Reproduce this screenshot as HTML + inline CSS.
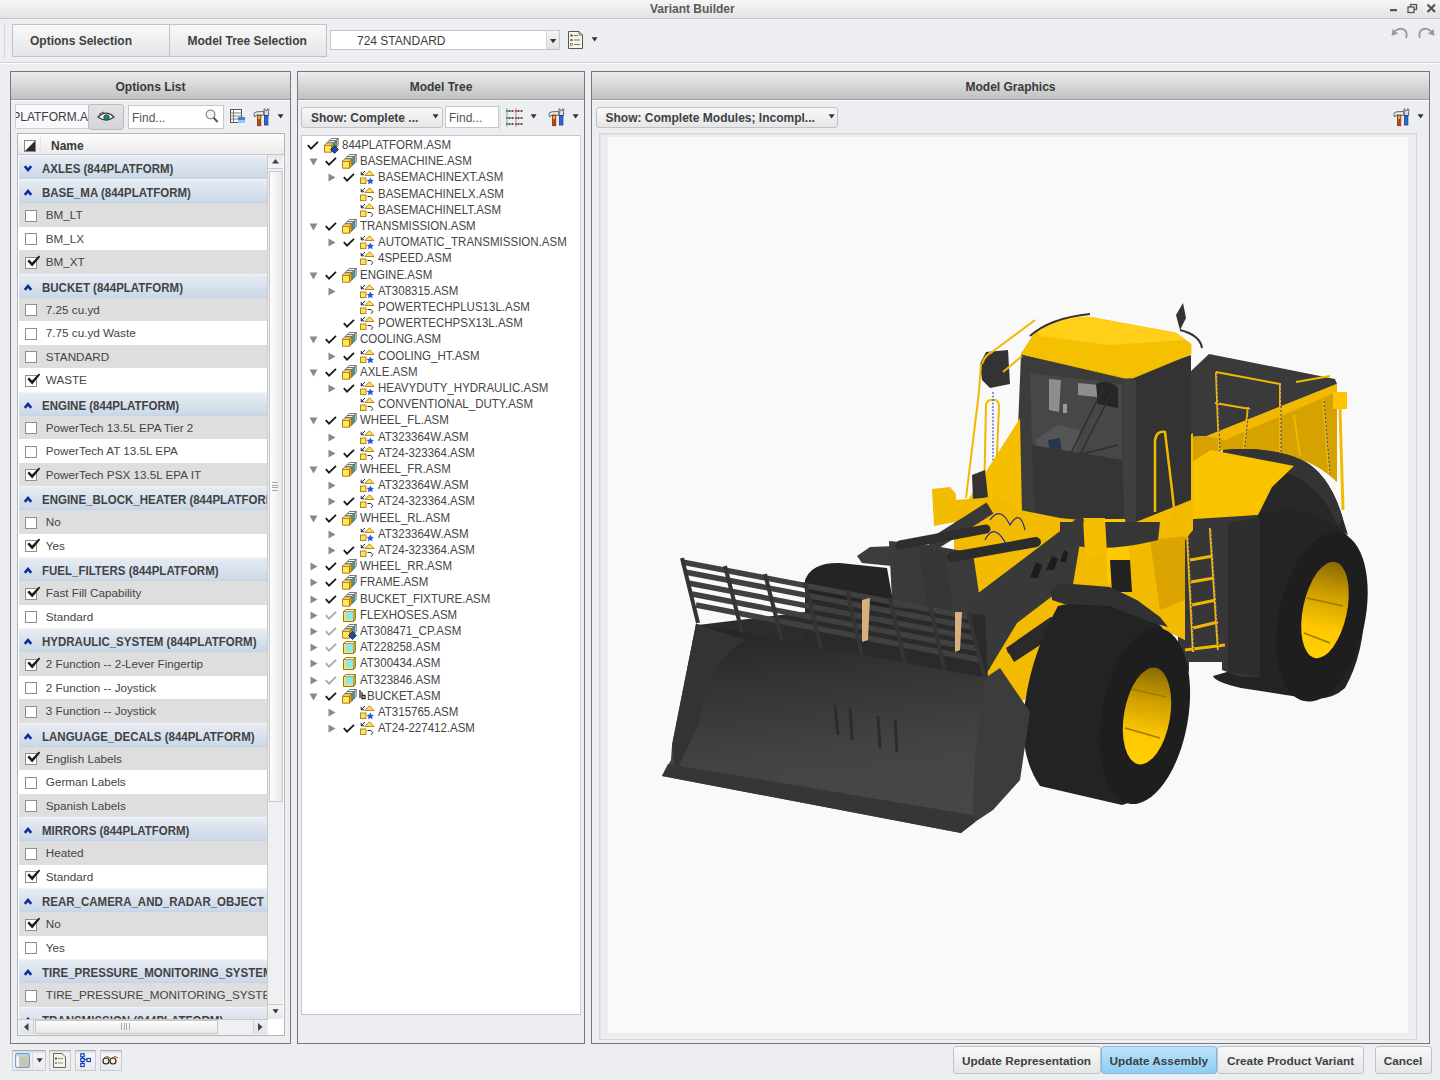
<!DOCTYPE html>
<html><head><meta charset="utf-8"><style>
*{box-sizing:border-box;margin:0;padding:0}
html,body{width:1440px;height:1080px;overflow:hidden;background:#eceef1;font-family:"Liberation Sans",sans-serif;color:#3a3a3a;position:relative}
.a{position:absolute}
svg{position:absolute;overflow:visible}
#title{left:0;top:0;width:1440px;height:19px;background:linear-gradient(#f6f6f7,#e2e3e5);border-bottom:1px solid #c4c6c9}
#tbar{left:0;top:19px;width:1440px;height:44px;border-bottom:1px solid #cdd0d3;box-shadow:0 1px 0 #fff}
.btn{background:linear-gradient(#f8f8f8,#e5e6e7);border:1px solid #c0c2c5;font-size:12px;font-weight:bold;color:#404040;text-align:center;white-space:nowrap}
.panel{border:1px solid #777;background:#eceef1}
.phead{position:absolute;left:0;top:0;right:0;height:28px;background:linear-gradient(#ececec,#c0c1c1);border-bottom:1px solid #9c9d9e;font-size:12px;font-weight:bold;color:#3a3a3a;text-align:center;line-height:30px;box-shadow:0 1px 0 #fafafa}
.inp{background:#fff;border:1px solid #c5c7ca;font-size:12px;color:#555;white-space:nowrap;overflow:hidden}
.g{position:relative;height:24px;background:linear-gradient(#f3f6fa 0,#e6ebf2 2px,#ccd9e8 22px,#c3d3e5 24px);font-weight:bold;font-size:11.5px;line-height:28px;padding-left:23.5px;white-space:nowrap;overflow:hidden;color:#424242}
.i{position:relative;height:23.5px;line-height:24.7px;padding-left:27.3px;white-space:nowrap;overflow:hidden;background:#fff;font-size:11.7px;color:#444}
.i.s{background:#dedede}
.cb{position:absolute;left:6px;top:6.5px;width:12px;height:12px;border:1px solid #8e8e8e;background:#fff}
.tr{position:absolute;height:16px;line-height:17px;white-space:nowrap;font-size:11.5px;color:#454545;transform:scaleY(1.07);transform-origin:0 12.5px}

.g span{display:inline-block;transform:scaleY(1.13);transform-origin:0 18px}

</style></head><body>
<div id="title" class="a"><span class="a" style="left:650px;top:2px;font-size:12px;font-weight:bold;color:#5a5a5a">Variant Builder</span></div>
<div id="tbar" class="a"></div>
<div class="a" style="left:4px;top:23px;width:1px;height:35px;background:#d3d5d8"></div>
<div class="a btn" style="left:12px;top:24px;width:158px;height:33px;line-height:33px;text-align:left;padding-left:17px">Options Selection</div>
<div class="a btn" style="left:169px;top:24px;width:158px;height:33px;line-height:33px;text-align:left;padding-left:17.5px">Model Tree Selection</div>
<div class="a inp" style="left:330px;top:30px;width:230px;height:20px;line-height:21px;padding-left:26px;color:#3c3c3c">724 STANDARD</div>
<div class="a" style="left:546px;top:31px;width:13px;height:18px;background:linear-gradient(#f4f4f4,#e2e2e2);border-left:1px solid #d5d5d5"></div>
<svg style="left:550px;top:38.5px" width="7" height="5"><path d="M0 0h6.2l-3.1 4.3z" fill="#2e3340"/></svg>
<svg style="left:568px;top:31px" width="15" height="18" viewBox="0 0 15 18"><path d="M0.5 0.5h10.5l3.5 3.5v13.5h-14z" fill="#f7f5e6" stroke="#555" stroke-width="1"/><path d="M11 0.5v3.5h3.5" fill="none" stroke="#555" stroke-width="0.8"/><rect x="2.5" y="3.5" width="2" height="2" fill="#333"/><rect x="2.5" y="8" width="2" height="2" fill="#555"/><rect x="2.5" y="12.5" width="2" height="2" fill="none" stroke="#555" stroke-width="0.6"/><path d="M6 4.5h4M6 9h6M6 13.5h6" stroke="#666" stroke-width="0.9"/></svg>
<svg style="left:591px;top:37px" width="7" height="5"><path d="M0.6 0.3h6l-3 4.2z" fill="#2e3340"/></svg>
<svg style="left:1389px;top:4px" width="10" height="10"><rect x="1" y="5" width="7" height="2.2" fill="#555"/></svg>
<svg style="left:1407px;top:3px" width="11" height="11" viewBox="0 0 11 11"><rect x="3.5" y="1.5" width="6" height="5" fill="none" stroke="#555" stroke-width="1.3"/><rect x="1" y="4" width="6" height="5.5" fill="#eaeaea" stroke="#555" stroke-width="1.3"/></svg>
<svg style="left:1426px;top:3px" width="11" height="11" viewBox="0 0 11 11"><path d="M1.5 1.5L9 9M9 1.5L1.5 9" stroke="#555" stroke-width="2.2"/></svg>
<svg style="left:1391px;top:27px" width="18" height="13" viewBox="0 0 18 13"><path d="M4 4 Q9 0 13.5 3 Q17 6 15 11" fill="none" stroke="#9a9a9a" stroke-width="1.8"/><path d="M0.5 9 L1.5 2 L7 6.5Z" fill="#9a9a9a"/></svg>
<svg style="left:1417px;top:27px" width="18" height="13" viewBox="0 0 18 13"><path d="M14 4 Q9 0 4.5 3 Q1 6 3 11" fill="none" stroke="#9a9a9a" stroke-width="1.8"/><path d="M17.5 9 L16.5 2 L11 6.5Z" fill="#9a9a9a"/></svg>
<div class="a panel" style="left:10px;top:71px;width:281px;height:973px"><div class="phead">Options List</div></div>
<div class="a inp" style="left:15px;top:104px;width:74px;height:25px;line-height:25px;background:#f9f8fc;border-color:#cfd0d3;color:#3c3c3c;direction:rtl;text-align:left;padding-left:1px"><span style="direction:ltr;unicode-bidi:bidi-override">PLATFORM.A</span></div>
<div class="a" style="left:88px;top:104px;width:36px;height:26px;border:1px solid #b9bbbe;border-radius:3px;background:linear-gradient(#e2e3e5,#d4d5d7)"></div>
<svg style="left:96px;top:110px" width="20" height="14" viewBox="0 0 20 14"><path d="M2 7 Q10 -1 18 7 Q10 13 2 7Z" fill="#fff" stroke="#3a3a3a" stroke-width="1.2"/><path d="M3 4 L8 2 M2.5 6 L7 4" stroke="#555" stroke-width="1"/><circle cx="10.5" cy="7.5" r="2.8" fill="#0f8a7a" stroke="#333" stroke-width="0.8"/></svg>
<div class="a inp" style="left:128px;top:105px;width:96px;height:24px;line-height:24px;padding-left:3px">Find...</div>
<svg style="left:205px;top:109px" width="14" height="15" viewBox="0 0 14 15"><circle cx="5.5" cy="5.5" r="4.3" fill="#f4f4f4" stroke="#8a8a8a" stroke-width="1.3"/><path d="M8.6 8.8 L12.6 13" stroke="#555" stroke-width="2"/></svg>
<svg style="left:230px;top:109px" width="16" height="15" viewBox="0 0 16 15"><rect x="0.5" y="0.5" width="11" height="13" fill="#fff" stroke="#555"/><path d="M0.5 4h11M0.5 7h11M0.5 10h11M3.5 0.5v13" stroke="#777" stroke-width="1"/><rect x="8" y="8" width="7" height="3" fill="#3d7fd0"/><rect x="8" y="11" width="7" height="3" fill="#9ec3ee"/></svg>
<svg style="left:253px;top:108px" width="18" height="18" viewBox="0 0 18 18"><path d="M0.8 6.8 Q0.8 4 4 3.8 L10.8 3.5 L10.8 7.2 L4.2 7.2 Q2.2 7.2 1.8 9Z" fill="#ececec" stroke="#555" stroke-width="0.9"/><rect x="4.6" y="7.2" width="3.2" height="10.5" fill="#f2b020" stroke="#6a2a0a" stroke-width="0.8"/><rect x="5.3" y="11" width="1.8" height="6.3" fill="#d02010"/><path d="M11.2 7.5 L11.2 3.2 Q10.2 1.5 11.6 0.6 L12.6 2.6 L14 2.6 L15 0.6 Q16.6 1.6 15.6 3.4 L15.6 7.5Z" fill="#dcdcdc" stroke="#555" stroke-width="0.9"/><rect x="11.5" y="7.5" width="3.4" height="9.5" fill="#2a6ad8" stroke="#1a3a80" stroke-width="0.8"/></svg>
<svg style="left:277px;top:114px" width="7" height="5"><path d="M0.6 0.3h6l-3 4.2z" fill="#2e3340"/></svg>
<div class="a" style="left:17px;top:133px;width:268px;height:903px;border:1px solid #b4b6b9;background:#fff"></div>
<div class="a" style="left:18px;top:134px;width:266px;height:21px;background:linear-gradient(#fdfdfd,#ebebeb);border-bottom:1px solid #c4c6c8"></div>
<div class="a" style="left:40px;top:136px;width:1px;height:18px;background:#e4e4e4"></div>
<svg style="left:24px;top:140px" width="12" height="12" viewBox="0 0 12 12"><rect x="0.5" y="0.5" width="11" height="11" fill="#fff" stroke="#888"/><path d="M1 11 L11 1 L11 11Z" fill="#2a2a2a"/></svg>
<div class="a" style="left:51px;top:136px;font-size:12px;font-weight:bold;color:#3a3a3a;line-height:20px">Name</div>
<div class="a" style="left:18.5px;top:155px;width:249px;height:864px;overflow:hidden"><div class="g"><svg style="left:5px;top:10px" width="8" height="7" viewBox="0 0 8 7"><path d="M0.8 1.2 L4 5 L7.2 1.2" fill="none" stroke="#0a2d9a" stroke-width="2.6"/></svg><span>AXLES (844PLATFORM)</span></div><div class="g"><svg style="left:5px;top:10px" width="8" height="7" viewBox="0 0 8 7"><path d="M0.8 5.8 L4 2 L7.2 5.8" fill="none" stroke="#0a2d9a" stroke-width="2.6"/></svg><span>BASE_MA (844PLATFORM)</span></div><div class="i s"><div class="cb"></div>BM_LT</div><div class="i"><div class="cb"></div>BM_LX</div><div class="i s"><div class="cb"><svg style="left:1px;top:-4px" width="15" height="15" viewBox="0 0 15 15"><path d="M0.4 7.2 L2.2 5.6 L5 8.6 L12 1.6 L13.2 2.8 L5.2 12.6Z" fill="#1a1a1a"/></svg></div>BM_XT</div><div class="g"><svg style="left:5px;top:10px" width="8" height="7" viewBox="0 0 8 7"><path d="M0.8 5.8 L4 2 L7.2 5.8" fill="none" stroke="#0a2d9a" stroke-width="2.6"/></svg><span>BUCKET (844PLATFORM)</span></div><div class="i s"><div class="cb"></div>7.25 cu.yd</div><div class="i"><div class="cb"></div>7.75 cu.yd Waste</div><div class="i s"><div class="cb"></div>STANDARD</div><div class="i"><div class="cb"><svg style="left:1px;top:-4px" width="15" height="15" viewBox="0 0 15 15"><path d="M0.4 7.2 L2.2 5.6 L5 8.6 L12 1.6 L13.2 2.8 L5.2 12.6Z" fill="#1a1a1a"/></svg></div>WASTE</div><div class="g"><svg style="left:5px;top:10px" width="8" height="7" viewBox="0 0 8 7"><path d="M0.8 5.8 L4 2 L7.2 5.8" fill="none" stroke="#0a2d9a" stroke-width="2.6"/></svg><span>ENGINE (844PLATFORM)</span></div><div class="i s"><div class="cb"></div>PowerTech 13.5L EPA Tier 2</div><div class="i"><div class="cb"></div>PowerTech AT 13.5L EPA</div><div class="i s"><div class="cb"><svg style="left:1px;top:-4px" width="15" height="15" viewBox="0 0 15 15"><path d="M0.4 7.2 L2.2 5.6 L5 8.6 L12 1.6 L13.2 2.8 L5.2 12.6Z" fill="#1a1a1a"/></svg></div>PowerTech PSX 13.5L EPA IT</div><div class="g"><svg style="left:5px;top:10px" width="8" height="7" viewBox="0 0 8 7"><path d="M0.8 5.8 L4 2 L7.2 5.8" fill="none" stroke="#0a2d9a" stroke-width="2.6"/></svg><span>ENGINE_BLOCK_HEATER (844PLATFORM)</span></div><div class="i s"><div class="cb"></div>No</div><div class="i"><div class="cb"><svg style="left:1px;top:-4px" width="15" height="15" viewBox="0 0 15 15"><path d="M0.4 7.2 L2.2 5.6 L5 8.6 L12 1.6 L13.2 2.8 L5.2 12.6Z" fill="#1a1a1a"/></svg></div>Yes</div><div class="g"><svg style="left:5px;top:10px" width="8" height="7" viewBox="0 0 8 7"><path d="M0.8 5.8 L4 2 L7.2 5.8" fill="none" stroke="#0a2d9a" stroke-width="2.6"/></svg><span>FUEL_FILTERS (844PLATFORM)</span></div><div class="i s"><div class="cb"><svg style="left:1px;top:-4px" width="15" height="15" viewBox="0 0 15 15"><path d="M0.4 7.2 L2.2 5.6 L5 8.6 L12 1.6 L13.2 2.8 L5.2 12.6Z" fill="#1a1a1a"/></svg></div>Fast Fill Capability</div><div class="i"><div class="cb"></div>Standard</div><div class="g"><svg style="left:5px;top:10px" width="8" height="7" viewBox="0 0 8 7"><path d="M0.8 5.8 L4 2 L7.2 5.8" fill="none" stroke="#0a2d9a" stroke-width="2.6"/></svg><span>HYDRAULIC_SYSTEM (844PLATFORM)</span></div><div class="i s"><div class="cb"><svg style="left:1px;top:-4px" width="15" height="15" viewBox="0 0 15 15"><path d="M0.4 7.2 L2.2 5.6 L5 8.6 L12 1.6 L13.2 2.8 L5.2 12.6Z" fill="#1a1a1a"/></svg></div>2 Function -- 2-Lever Fingertip</div><div class="i"><div class="cb"></div>2 Function -- Joystick</div><div class="i s"><div class="cb"></div>3 Function -- Joystick</div><div class="g"><svg style="left:5px;top:10px" width="8" height="7" viewBox="0 0 8 7"><path d="M0.8 5.8 L4 2 L7.2 5.8" fill="none" stroke="#0a2d9a" stroke-width="2.6"/></svg><span>LANGUAGE_DECALS (844PLATFORM)</span></div><div class="i s"><div class="cb"><svg style="left:1px;top:-4px" width="15" height="15" viewBox="0 0 15 15"><path d="M0.4 7.2 L2.2 5.6 L5 8.6 L12 1.6 L13.2 2.8 L5.2 12.6Z" fill="#1a1a1a"/></svg></div>English Labels</div><div class="i"><div class="cb"></div>German Labels</div><div class="i s"><div class="cb"></div>Spanish Labels</div><div class="g"><svg style="left:5px;top:10px" width="8" height="7" viewBox="0 0 8 7"><path d="M0.8 5.8 L4 2 L7.2 5.8" fill="none" stroke="#0a2d9a" stroke-width="2.6"/></svg><span>MIRRORS (844PLATFORM)</span></div><div class="i s"><div class="cb"></div>Heated</div><div class="i"><div class="cb"><svg style="left:1px;top:-4px" width="15" height="15" viewBox="0 0 15 15"><path d="M0.4 7.2 L2.2 5.6 L5 8.6 L12 1.6 L13.2 2.8 L5.2 12.6Z" fill="#1a1a1a"/></svg></div>Standard</div><div class="g"><svg style="left:5px;top:10px" width="8" height="7" viewBox="0 0 8 7"><path d="M0.8 5.8 L4 2 L7.2 5.8" fill="none" stroke="#0a2d9a" stroke-width="2.6"/></svg><span>REAR_CAMERA_AND_RADAR_OBJECT (844PLATFORM)</span></div><div class="i s"><div class="cb"><svg style="left:1px;top:-4px" width="15" height="15" viewBox="0 0 15 15"><path d="M0.4 7.2 L2.2 5.6 L5 8.6 L12 1.6 L13.2 2.8 L5.2 12.6Z" fill="#1a1a1a"/></svg></div>No</div><div class="i"><div class="cb"></div>Yes</div><div class="g"><svg style="left:5px;top:10px" width="8" height="7" viewBox="0 0 8 7"><path d="M0.8 5.8 L4 2 L7.2 5.8" fill="none" stroke="#0a2d9a" stroke-width="2.6"/></svg><span>TIRE_PRESSURE_MONITORING_SYSTEM (844PLATFORM)</span></div><div class="i s"><div class="cb"></div>TIRE_PRESSURE_MONITORING_SYSTEM</div><div class="g"><svg style="left:5px;top:10px" width="8" height="7" viewBox="0 0 8 7"><path d="M0.8 5.8 L4 2 L7.2 5.8" fill="none" stroke="#0a2d9a" stroke-width="2.6"/></svg><span>TRANSMISSION (844PLATFORM)</span></div></div>
<div class="a" style="left:267px;top:155px;width:16px;height:864px;background:#eef0f2;border-left:1px solid #c8cacd"></div>
<div class="a" style="left:268px;top:155px;width:15px;height:14px;background:linear-gradient(#e6e8ea,#f5f5f5);border-bottom:1px solid #c9cbce"></div>
<svg style="left:272px;top:159px" width="7" height="5"><path d="M0 4.5h7l-3.5-4.5z" fill="#3e4350"/></svg>
<div class="a" style="left:268.5px;top:171px;width:14px;height:631px;background:linear-gradient(90deg,#fdfdfd,#e7e7e8);border:1px solid #c5c7ca"></div>
<div class="a" style="left:272px;top:481.5px;width:6px;height:10px;background:repeating-linear-gradient(#a8a8a8 0 1px,transparent 1px 2.5px)"></div>
<div class="a" style="left:268px;top:1004px;width:15px;height:15px;background:linear-gradient(#f5f5f5,#e6e8ea);border-top:1px solid #c9cbce"></div>
<svg style="left:272px;top:1009px" width="7" height="5"><path d="M0.6 0.3h6l-3 4.2z" fill="#2e3340"/></svg>
<div class="a" style="left:18px;top:1019px;width:249.5px;height:16px;background:#eef0f2;border-top:1px solid #c8cacd"></div>
<div class="a" style="left:19.5px;top:1020px;width:14px;height:14px;background:linear-gradient(#eeeff1,#e2e3e5);border-right:1px solid #cfd1d4"></div>
<svg style="left:24px;top:1023px" width="5" height="8"><path d="M4.5 0v8L0 4z" fill="#3e4350"/></svg>
<div class="a" style="left:34.5px;top:1020px;width:183px;height:14px;background:linear-gradient(#fdfdfd,#e7e7e8);border:1px solid #c5c7ca"></div>
<div class="a" style="left:121px;top:1023px;width:10px;height:7px;background:repeating-linear-gradient(90deg,#a8a8a8 0 1px,transparent 1px 2.5px)"></div>
<div class="a" style="left:252.5px;top:1020px;width:14.5px;height:14px;background:linear-gradient(#eeeff1,#e2e3e5);border-left:1px solid #cfd1d4"></div>
<svg style="left:258px;top:1023px" width="5" height="8"><path d="M0 0v8L4.5 4z" fill="#3e4350"/></svg>
<div class="a panel" style="left:297px;top:71px;width:288px;height:973px"><div class="phead">Model Tree</div></div>
<div class="a btn" style="left:301px;top:106.5px;width:142px;height:21px;line-height:21px;border-radius:3px;text-align:left;padding-left:9px">Show: Complete ...</div>
<svg style="left:432px;top:114px" width="7" height="5"><path d="M0.6 0.3h6l-3 4.2z" fill="#2e3340"/></svg>
<div class="a inp" style="left:445px;top:106px;width:54px;height:22px;line-height:22px;padding-left:3px">Find...</div>
<div class="a" style="left:500px;top:103px;width:1px;height:28px;background:#d6d8db;box-shadow:1px 0 0 #fafafa"></div>
<svg style="left:506px;top:108px" width="18" height="19" viewBox="0 0 18 19"><rect x="0" y="0" width="2" height="19" fill="#c4c4c4"/><rect x="9" y="0" width="2" height="19" fill="#c4c4c4"/><path d="M2.5 3h5M11.5 3h5M2.5 10h5M11.5 10h5M2.5 16h5M11.5 16h5" stroke="#222" stroke-width="1.3" stroke-dasharray="2 1"/><rect x="0" y="2" width="2" height="2" fill="#22c02a"/><rect x="0" y="9" width="2" height="2" fill="#22c02a"/><rect x="0" y="15" width="2" height="2" fill="#22c02a"/><rect x="9" y="2" width="2" height="2" fill="#e84040"/><rect x="9" y="9" width="2" height="2" fill="#e84040"/><rect x="9" y="15" width="2" height="2" fill="#e84040"/></svg>
<svg style="left:530px;top:114px" width="7" height="5"><path d="M0.6 0.3h6l-3 4.2z" fill="#2e3340"/></svg>
<svg style="left:548px;top:108px" width="18" height="18" viewBox="0 0 18 18"><path d="M0.8 6.8 Q0.8 4 4 3.8 L10.8 3.5 L10.8 7.2 L4.2 7.2 Q2.2 7.2 1.8 9Z" fill="#ececec" stroke="#555" stroke-width="0.9"/><rect x="4.6" y="7.2" width="3.2" height="10.5" fill="#f2b020" stroke="#6a2a0a" stroke-width="0.8"/><rect x="5.3" y="11" width="1.8" height="6.3" fill="#d02010"/><path d="M11.2 7.5 L11.2 3.2 Q10.2 1.5 11.6 0.6 L12.6 2.6 L14 2.6 L15 0.6 Q16.6 1.6 15.6 3.4 L15.6 7.5Z" fill="#dcdcdc" stroke="#555" stroke-width="0.9"/><rect x="11.5" y="7.5" width="3.4" height="9.5" fill="#2a6ad8" stroke="#1a3a80" stroke-width="0.8"/></svg>
<svg style="left:572px;top:114px" width="7" height="5"><path d="M0.6 0.3h6l-3 4.2z" fill="#2e3340"/></svg>
<div class="a" style="left:301px;top:135px;width:280px;height:880px;background:#fff;border:1px solid #c3c5c8;border-right-color:#d0d2d5"></div>
<svg style="left:307px;top:141.0px" width="12" height="9" viewBox="0 0 12 9"><path d="M0.8 4.2L4 7.6L11 0.8" fill="none" stroke="#1a1a1a" stroke-width="1.8"/></svg>
<svg style="left:324px;top:138.0px" width="24" height="16" viewBox="0 0 24 16"><path d="M5.0 2.7h7v7h-7z" fill="#f4f4f4" stroke="#6a6a6a" stroke-width="0.9"/><path d="M5.0 2.7l2.2-2.2h7l-2.2 2.2z" fill="#ffffff" stroke="#6a6a6a" stroke-width="0.9"/><path d="M12.0 2.7l2.2-2.2v7l-2.2 2.2z" fill="#d8d8d8" stroke="#6a6a6a" stroke-width="0.9"/><path d="M3.0 4.7h7v7h-7z" fill="#8ae6e6" stroke="#5a6a6a" stroke-width="0.9"/><path d="M3.0 4.7l2.2-2.2h7l-2.2 2.2z" fill="#c8f6f6" stroke="#5a6a6a" stroke-width="0.9"/><path d="M10.0 4.7l2.2-2.2v7l-2.2 2.2z" fill="#40b0b0" stroke="#5a6a6a" stroke-width="0.9"/><path d="M0.5 7.2h7v7h-7z" fill="#ffe95a" stroke="#a8700a" stroke-width="0.9"/><path d="M0.5 7.2l2.2-2.2h7l-2.2 2.2z" fill="#fff6b0" stroke="#a8700a" stroke-width="0.9"/><path d="M7.5 7.2l2.2-2.2v7l-2.2 2.2z" fill="#d8b020" stroke="#a8700a" stroke-width="0.9"/><path d="M10.5 7.5l4 4-4 4-4-4z" fill="#1d4a9a" stroke="#0c2a60" stroke-width="0.8"/></svg>
<div class="tr" style="left:342px;top:137.0px">844PLATFORM.ASM</div>
<svg style="left:309px;top:158.2px" width="9" height="8"><path d="M0.5 0.5h8l-4 7z" fill="#8a8a8a"/></svg>
<svg style="left:325px;top:157.2px" width="12" height="9" viewBox="0 0 12 9"><path d="M0.8 4.2L4 7.6L11 0.8" fill="none" stroke="#1a1a1a" stroke-width="1.8"/></svg>
<svg style="left:342px;top:154.2px" width="24" height="16" viewBox="0 0 24 16"><path d="M5.0 2.7h7v7h-7z" fill="#f4f4f4" stroke="#6a6a6a" stroke-width="0.9"/><path d="M5.0 2.7l2.2-2.2h7l-2.2 2.2z" fill="#ffffff" stroke="#6a6a6a" stroke-width="0.9"/><path d="M12.0 2.7l2.2-2.2v7l-2.2 2.2z" fill="#d8d8d8" stroke="#6a6a6a" stroke-width="0.9"/><path d="M3.0 4.7h7v7h-7z" fill="#8ae6e6" stroke="#5a6a6a" stroke-width="0.9"/><path d="M3.0 4.7l2.2-2.2h7l-2.2 2.2z" fill="#c8f6f6" stroke="#5a6a6a" stroke-width="0.9"/><path d="M10.0 4.7l2.2-2.2v7l-2.2 2.2z" fill="#40b0b0" stroke="#5a6a6a" stroke-width="0.9"/><path d="M0.5 7.2h7v7h-7z" fill="#ffe95a" stroke="#a8700a" stroke-width="0.9"/><path d="M0.5 7.2l2.2-2.2h7l-2.2 2.2z" fill="#fff6b0" stroke="#a8700a" stroke-width="0.9"/><path d="M7.5 7.2l2.2-2.2v7l-2.2 2.2z" fill="#d8b020" stroke="#a8700a" stroke-width="0.9"/></svg>
<div class="tr" style="left:360px;top:153.2px">BASEMACHINE.ASM</div>
<svg style="left:328px;top:173.4px" width="8" height="9"><path d="M0.5 0.5v8l7-4z" fill="#8a8a8a"/></svg>
<svg style="left:343px;top:173.4px" width="12" height="9" viewBox="0 0 12 9"><path d="M0.8 4.2L4 7.6L11 0.8" fill="none" stroke="#1a1a1a" stroke-width="1.8"/></svg>
<svg style="left:360px;top:170.4px" width="24" height="16" viewBox="0 0 24 16"><path d="M5 1L1.2 4.8M1.2 4.8v-3M1.2 4.8h3" stroke="#222" stroke-width="1" fill="none"/><path d="M9.5 0.8L14 5.5h-9z" fill="#ffe25a" stroke="#b07a10" stroke-width="0.9"/><rect x="0.5" y="8" width="5.5" height="5.5" fill="#ffe25a" stroke="#b07a10" stroke-width="0.9"/><path d="M10.3 7.5l1.1 2.3 2.5 0.3-1.8 1.7 0.5 2.5-2.3-1.2-2.3 1.2 0.5-2.5-1.8-1.7 2.5-0.3z" fill="#1f5ad8"/></svg>
<div class="tr" style="left:378px;top:169.4px">BASEMACHINEXT.ASM</div>
<svg style="left:360px;top:186.6px" width="24" height="16" viewBox="0 0 24 16"><path d="M5 1L1.2 4.8M1.2 4.8v-3M1.2 4.8h3" stroke="#222" stroke-width="1" fill="none"/><path d="M9.5 0.8L14 5.5h-9z" fill="#ffe25a" stroke="#b07a10" stroke-width="0.9"/><rect x="0.5" y="8" width="5.5" height="5.5" fill="#ffe25a" stroke="#b07a10" stroke-width="0.9"/><path d="M7.5 9.5h3.5l1.8 2.2-1.8 2.2" stroke="#333" stroke-width="1" fill="none"/></svg>
<div class="tr" style="left:378px;top:185.6px">BASEMACHINELX.ASM</div>
<svg style="left:360px;top:202.8px" width="24" height="16" viewBox="0 0 24 16"><path d="M5 1L1.2 4.8M1.2 4.8v-3M1.2 4.8h3" stroke="#222" stroke-width="1" fill="none"/><path d="M9.5 0.8L14 5.5h-9z" fill="#ffe25a" stroke="#b07a10" stroke-width="0.9"/><rect x="0.5" y="8" width="5.5" height="5.5" fill="#ffe25a" stroke="#b07a10" stroke-width="0.9"/><path d="M7.5 9.5h3.5l1.8 2.2-1.8 2.2" stroke="#333" stroke-width="1" fill="none"/></svg>
<div class="tr" style="left:378px;top:201.8px">BASEMACHINELT.ASM</div>
<svg style="left:309px;top:223.0px" width="9" height="8"><path d="M0.5 0.5h8l-4 7z" fill="#8a8a8a"/></svg>
<svg style="left:325px;top:222.0px" width="12" height="9" viewBox="0 0 12 9"><path d="M0.8 4.2L4 7.6L11 0.8" fill="none" stroke="#1a1a1a" stroke-width="1.8"/></svg>
<svg style="left:342px;top:219.0px" width="24" height="16" viewBox="0 0 24 16"><path d="M5.0 2.7h7v7h-7z" fill="#f4f4f4" stroke="#6a6a6a" stroke-width="0.9"/><path d="M5.0 2.7l2.2-2.2h7l-2.2 2.2z" fill="#ffffff" stroke="#6a6a6a" stroke-width="0.9"/><path d="M12.0 2.7l2.2-2.2v7l-2.2 2.2z" fill="#d8d8d8" stroke="#6a6a6a" stroke-width="0.9"/><path d="M3.0 4.7h7v7h-7z" fill="#8ae6e6" stroke="#5a6a6a" stroke-width="0.9"/><path d="M3.0 4.7l2.2-2.2h7l-2.2 2.2z" fill="#c8f6f6" stroke="#5a6a6a" stroke-width="0.9"/><path d="M10.0 4.7l2.2-2.2v7l-2.2 2.2z" fill="#40b0b0" stroke="#5a6a6a" stroke-width="0.9"/><path d="M0.5 7.2h7v7h-7z" fill="#ffe95a" stroke="#a8700a" stroke-width="0.9"/><path d="M0.5 7.2l2.2-2.2h7l-2.2 2.2z" fill="#fff6b0" stroke="#a8700a" stroke-width="0.9"/><path d="M7.5 7.2l2.2-2.2v7l-2.2 2.2z" fill="#d8b020" stroke="#a8700a" stroke-width="0.9"/></svg>
<div class="tr" style="left:360px;top:218.0px">TRANSMISSION.ASM</div>
<svg style="left:328px;top:238.2px" width="8" height="9"><path d="M0.5 0.5v8l7-4z" fill="#8a8a8a"/></svg>
<svg style="left:343px;top:238.2px" width="12" height="9" viewBox="0 0 12 9"><path d="M0.8 4.2L4 7.6L11 0.8" fill="none" stroke="#1a1a1a" stroke-width="1.8"/></svg>
<svg style="left:360px;top:235.2px" width="24" height="16" viewBox="0 0 24 16"><path d="M5 1L1.2 4.8M1.2 4.8v-3M1.2 4.8h3" stroke="#222" stroke-width="1" fill="none"/><path d="M9.5 0.8L14 5.5h-9z" fill="#ffe25a" stroke="#b07a10" stroke-width="0.9"/><rect x="0.5" y="8" width="5.5" height="5.5" fill="#ffe25a" stroke="#b07a10" stroke-width="0.9"/><path d="M10.3 7.5l1.1 2.3 2.5 0.3-1.8 1.7 0.5 2.5-2.3-1.2-2.3 1.2 0.5-2.5-1.8-1.7 2.5-0.3z" fill="#1f5ad8"/></svg>
<div class="tr" style="left:378px;top:234.2px">AUTOMATIC_TRANSMISSION.ASM</div>
<svg style="left:360px;top:251.39999999999998px" width="24" height="16" viewBox="0 0 24 16"><path d="M5 1L1.2 4.8M1.2 4.8v-3M1.2 4.8h3" stroke="#222" stroke-width="1" fill="none"/><path d="M9.5 0.8L14 5.5h-9z" fill="#ffe25a" stroke="#b07a10" stroke-width="0.9"/><rect x="0.5" y="8" width="5.5" height="5.5" fill="#ffe25a" stroke="#b07a10" stroke-width="0.9"/><path d="M7.5 9.5h3.5l1.8 2.2-1.8 2.2" stroke="#333" stroke-width="1" fill="none"/></svg>
<div class="tr" style="left:378px;top:250.39999999999998px">4SPEED.ASM</div>
<svg style="left:309px;top:271.6px" width="9" height="8"><path d="M0.5 0.5h8l-4 7z" fill="#8a8a8a"/></svg>
<svg style="left:325px;top:270.6px" width="12" height="9" viewBox="0 0 12 9"><path d="M0.8 4.2L4 7.6L11 0.8" fill="none" stroke="#1a1a1a" stroke-width="1.8"/></svg>
<svg style="left:342px;top:267.6px" width="24" height="16" viewBox="0 0 24 16"><path d="M5.0 2.7h7v7h-7z" fill="#f4f4f4" stroke="#6a6a6a" stroke-width="0.9"/><path d="M5.0 2.7l2.2-2.2h7l-2.2 2.2z" fill="#ffffff" stroke="#6a6a6a" stroke-width="0.9"/><path d="M12.0 2.7l2.2-2.2v7l-2.2 2.2z" fill="#d8d8d8" stroke="#6a6a6a" stroke-width="0.9"/><path d="M3.0 4.7h7v7h-7z" fill="#8ae6e6" stroke="#5a6a6a" stroke-width="0.9"/><path d="M3.0 4.7l2.2-2.2h7l-2.2 2.2z" fill="#c8f6f6" stroke="#5a6a6a" stroke-width="0.9"/><path d="M10.0 4.7l2.2-2.2v7l-2.2 2.2z" fill="#40b0b0" stroke="#5a6a6a" stroke-width="0.9"/><path d="M0.5 7.2h7v7h-7z" fill="#ffe95a" stroke="#a8700a" stroke-width="0.9"/><path d="M0.5 7.2l2.2-2.2h7l-2.2 2.2z" fill="#fff6b0" stroke="#a8700a" stroke-width="0.9"/><path d="M7.5 7.2l2.2-2.2v7l-2.2 2.2z" fill="#d8b020" stroke="#a8700a" stroke-width="0.9"/></svg>
<div class="tr" style="left:360px;top:266.6px">ENGINE.ASM</div>
<svg style="left:328px;top:286.79999999999995px" width="8" height="9"><path d="M0.5 0.5v8l7-4z" fill="#8a8a8a"/></svg>
<svg style="left:360px;top:283.79999999999995px" width="24" height="16" viewBox="0 0 24 16"><path d="M5 1L1.2 4.8M1.2 4.8v-3M1.2 4.8h3" stroke="#222" stroke-width="1" fill="none"/><path d="M9.5 0.8L14 5.5h-9z" fill="#ffe25a" stroke="#b07a10" stroke-width="0.9"/><rect x="0.5" y="8" width="5.5" height="5.5" fill="#ffe25a" stroke="#b07a10" stroke-width="0.9"/><path d="M10.3 7.5l1.1 2.3 2.5 0.3-1.8 1.7 0.5 2.5-2.3-1.2-2.3 1.2 0.5-2.5-1.8-1.7 2.5-0.3z" fill="#1f5ad8"/></svg>
<div class="tr" style="left:378px;top:282.79999999999995px">AT308315.ASM</div>
<svg style="left:360px;top:300.0px" width="24" height="16" viewBox="0 0 24 16"><path d="M5 1L1.2 4.8M1.2 4.8v-3M1.2 4.8h3" stroke="#222" stroke-width="1" fill="none"/><path d="M9.5 0.8L14 5.5h-9z" fill="#ffe25a" stroke="#b07a10" stroke-width="0.9"/><rect x="0.5" y="8" width="5.5" height="5.5" fill="#ffe25a" stroke="#b07a10" stroke-width="0.9"/><path d="M7.5 9.5h3.5l1.8 2.2-1.8 2.2" stroke="#333" stroke-width="1" fill="none"/></svg>
<div class="tr" style="left:378px;top:299.0px">POWERTECHPLUS13L.ASM</div>
<svg style="left:343px;top:319.2px" width="12" height="9" viewBox="0 0 12 9"><path d="M0.8 4.2L4 7.6L11 0.8" fill="none" stroke="#1a1a1a" stroke-width="1.8"/></svg>
<svg style="left:360px;top:316.2px" width="24" height="16" viewBox="0 0 24 16"><path d="M5 1L1.2 4.8M1.2 4.8v-3M1.2 4.8h3" stroke="#222" stroke-width="1" fill="none"/><path d="M9.5 0.8L14 5.5h-9z" fill="#ffe25a" stroke="#b07a10" stroke-width="0.9"/><rect x="0.5" y="8" width="5.5" height="5.5" fill="#ffe25a" stroke="#b07a10" stroke-width="0.9"/><path d="M7.5 9.5h3.5l1.8 2.2-1.8 2.2" stroke="#333" stroke-width="1" fill="none"/></svg>
<div class="tr" style="left:378px;top:315.2px">POWERTECHPSX13L.ASM</div>
<svg style="left:309px;top:336.4px" width="9" height="8"><path d="M0.5 0.5h8l-4 7z" fill="#8a8a8a"/></svg>
<svg style="left:325px;top:335.4px" width="12" height="9" viewBox="0 0 12 9"><path d="M0.8 4.2L4 7.6L11 0.8" fill="none" stroke="#1a1a1a" stroke-width="1.8"/></svg>
<svg style="left:342px;top:332.4px" width="24" height="16" viewBox="0 0 24 16"><path d="M5.0 2.7h7v7h-7z" fill="#f4f4f4" stroke="#6a6a6a" stroke-width="0.9"/><path d="M5.0 2.7l2.2-2.2h7l-2.2 2.2z" fill="#ffffff" stroke="#6a6a6a" stroke-width="0.9"/><path d="M12.0 2.7l2.2-2.2v7l-2.2 2.2z" fill="#d8d8d8" stroke="#6a6a6a" stroke-width="0.9"/><path d="M3.0 4.7h7v7h-7z" fill="#8ae6e6" stroke="#5a6a6a" stroke-width="0.9"/><path d="M3.0 4.7l2.2-2.2h7l-2.2 2.2z" fill="#c8f6f6" stroke="#5a6a6a" stroke-width="0.9"/><path d="M10.0 4.7l2.2-2.2v7l-2.2 2.2z" fill="#40b0b0" stroke="#5a6a6a" stroke-width="0.9"/><path d="M0.5 7.2h7v7h-7z" fill="#ffe95a" stroke="#a8700a" stroke-width="0.9"/><path d="M0.5 7.2l2.2-2.2h7l-2.2 2.2z" fill="#fff6b0" stroke="#a8700a" stroke-width="0.9"/><path d="M7.5 7.2l2.2-2.2v7l-2.2 2.2z" fill="#d8b020" stroke="#a8700a" stroke-width="0.9"/></svg>
<div class="tr" style="left:360px;top:331.4px">COOLING.ASM</div>
<svg style="left:328px;top:351.6px" width="8" height="9"><path d="M0.5 0.5v8l7-4z" fill="#8a8a8a"/></svg>
<svg style="left:343px;top:351.6px" width="12" height="9" viewBox="0 0 12 9"><path d="M0.8 4.2L4 7.6L11 0.8" fill="none" stroke="#1a1a1a" stroke-width="1.8"/></svg>
<svg style="left:360px;top:348.6px" width="24" height="16" viewBox="0 0 24 16"><path d="M5 1L1.2 4.8M1.2 4.8v-3M1.2 4.8h3" stroke="#222" stroke-width="1" fill="none"/><path d="M9.5 0.8L14 5.5h-9z" fill="#ffe25a" stroke="#b07a10" stroke-width="0.9"/><rect x="0.5" y="8" width="5.5" height="5.5" fill="#ffe25a" stroke="#b07a10" stroke-width="0.9"/><path d="M10.3 7.5l1.1 2.3 2.5 0.3-1.8 1.7 0.5 2.5-2.3-1.2-2.3 1.2 0.5-2.5-1.8-1.7 2.5-0.3z" fill="#1f5ad8"/></svg>
<div class="tr" style="left:378px;top:347.6px">COOLING_HT.ASM</div>
<svg style="left:309px;top:368.79999999999995px" width="9" height="8"><path d="M0.5 0.5h8l-4 7z" fill="#8a8a8a"/></svg>
<svg style="left:325px;top:367.79999999999995px" width="12" height="9" viewBox="0 0 12 9"><path d="M0.8 4.2L4 7.6L11 0.8" fill="none" stroke="#1a1a1a" stroke-width="1.8"/></svg>
<svg style="left:342px;top:364.79999999999995px" width="24" height="16" viewBox="0 0 24 16"><path d="M5.0 2.7h7v7h-7z" fill="#f4f4f4" stroke="#6a6a6a" stroke-width="0.9"/><path d="M5.0 2.7l2.2-2.2h7l-2.2 2.2z" fill="#ffffff" stroke="#6a6a6a" stroke-width="0.9"/><path d="M12.0 2.7l2.2-2.2v7l-2.2 2.2z" fill="#d8d8d8" stroke="#6a6a6a" stroke-width="0.9"/><path d="M3.0 4.7h7v7h-7z" fill="#8ae6e6" stroke="#5a6a6a" stroke-width="0.9"/><path d="M3.0 4.7l2.2-2.2h7l-2.2 2.2z" fill="#c8f6f6" stroke="#5a6a6a" stroke-width="0.9"/><path d="M10.0 4.7l2.2-2.2v7l-2.2 2.2z" fill="#40b0b0" stroke="#5a6a6a" stroke-width="0.9"/><path d="M0.5 7.2h7v7h-7z" fill="#ffe95a" stroke="#a8700a" stroke-width="0.9"/><path d="M0.5 7.2l2.2-2.2h7l-2.2 2.2z" fill="#fff6b0" stroke="#a8700a" stroke-width="0.9"/><path d="M7.5 7.2l2.2-2.2v7l-2.2 2.2z" fill="#d8b020" stroke="#a8700a" stroke-width="0.9"/></svg>
<div class="tr" style="left:360px;top:363.79999999999995px">AXLE.ASM</div>
<svg style="left:328px;top:384.0px" width="8" height="9"><path d="M0.5 0.5v8l7-4z" fill="#8a8a8a"/></svg>
<svg style="left:343px;top:384.0px" width="12" height="9" viewBox="0 0 12 9"><path d="M0.8 4.2L4 7.6L11 0.8" fill="none" stroke="#1a1a1a" stroke-width="1.8"/></svg>
<svg style="left:360px;top:381.0px" width="24" height="16" viewBox="0 0 24 16"><path d="M5 1L1.2 4.8M1.2 4.8v-3M1.2 4.8h3" stroke="#222" stroke-width="1" fill="none"/><path d="M9.5 0.8L14 5.5h-9z" fill="#ffe25a" stroke="#b07a10" stroke-width="0.9"/><rect x="0.5" y="8" width="5.5" height="5.5" fill="#ffe25a" stroke="#b07a10" stroke-width="0.9"/><path d="M10.3 7.5l1.1 2.3 2.5 0.3-1.8 1.7 0.5 2.5-2.3-1.2-2.3 1.2 0.5-2.5-1.8-1.7 2.5-0.3z" fill="#1f5ad8"/></svg>
<div class="tr" style="left:378px;top:380.0px">HEAVYDUTY_HYDRAULIC.ASM</div>
<svg style="left:360px;top:397.2px" width="24" height="16" viewBox="0 0 24 16"><path d="M5 1L1.2 4.8M1.2 4.8v-3M1.2 4.8h3" stroke="#222" stroke-width="1" fill="none"/><path d="M9.5 0.8L14 5.5h-9z" fill="#ffe25a" stroke="#b07a10" stroke-width="0.9"/><rect x="0.5" y="8" width="5.5" height="5.5" fill="#ffe25a" stroke="#b07a10" stroke-width="0.9"/><path d="M7.5 9.5h3.5l1.8 2.2-1.8 2.2" stroke="#333" stroke-width="1" fill="none"/></svg>
<div class="tr" style="left:378px;top:396.2px">CONVENTIONAL_DUTY.ASM</div>
<svg style="left:309px;top:417.4px" width="9" height="8"><path d="M0.5 0.5h8l-4 7z" fill="#8a8a8a"/></svg>
<svg style="left:325px;top:416.4px" width="12" height="9" viewBox="0 0 12 9"><path d="M0.8 4.2L4 7.6L11 0.8" fill="none" stroke="#1a1a1a" stroke-width="1.8"/></svg>
<svg style="left:342px;top:413.4px" width="24" height="16" viewBox="0 0 24 16"><path d="M5.0 2.7h7v7h-7z" fill="#f4f4f4" stroke="#6a6a6a" stroke-width="0.9"/><path d="M5.0 2.7l2.2-2.2h7l-2.2 2.2z" fill="#ffffff" stroke="#6a6a6a" stroke-width="0.9"/><path d="M12.0 2.7l2.2-2.2v7l-2.2 2.2z" fill="#d8d8d8" stroke="#6a6a6a" stroke-width="0.9"/><path d="M3.0 4.7h7v7h-7z" fill="#8ae6e6" stroke="#5a6a6a" stroke-width="0.9"/><path d="M3.0 4.7l2.2-2.2h7l-2.2 2.2z" fill="#c8f6f6" stroke="#5a6a6a" stroke-width="0.9"/><path d="M10.0 4.7l2.2-2.2v7l-2.2 2.2z" fill="#40b0b0" stroke="#5a6a6a" stroke-width="0.9"/><path d="M0.5 7.2h7v7h-7z" fill="#ffe95a" stroke="#a8700a" stroke-width="0.9"/><path d="M0.5 7.2l2.2-2.2h7l-2.2 2.2z" fill="#fff6b0" stroke="#a8700a" stroke-width="0.9"/><path d="M7.5 7.2l2.2-2.2v7l-2.2 2.2z" fill="#d8b020" stroke="#a8700a" stroke-width="0.9"/></svg>
<div class="tr" style="left:360px;top:412.4px">WHEEL_FL.ASM</div>
<svg style="left:328px;top:432.59999999999997px" width="8" height="9"><path d="M0.5 0.5v8l7-4z" fill="#8a8a8a"/></svg>
<svg style="left:360px;top:429.59999999999997px" width="24" height="16" viewBox="0 0 24 16"><path d="M5 1L1.2 4.8M1.2 4.8v-3M1.2 4.8h3" stroke="#222" stroke-width="1" fill="none"/><path d="M9.5 0.8L14 5.5h-9z" fill="#ffe25a" stroke="#b07a10" stroke-width="0.9"/><rect x="0.5" y="8" width="5.5" height="5.5" fill="#ffe25a" stroke="#b07a10" stroke-width="0.9"/><path d="M10.3 7.5l1.1 2.3 2.5 0.3-1.8 1.7 0.5 2.5-2.3-1.2-2.3 1.2 0.5-2.5-1.8-1.7 2.5-0.3z" fill="#1f5ad8"/></svg>
<div class="tr" style="left:378px;top:428.59999999999997px">AT323364W.ASM</div>
<svg style="left:328px;top:448.8px" width="8" height="9"><path d="M0.5 0.5v8l7-4z" fill="#8a8a8a"/></svg>
<svg style="left:343px;top:448.8px" width="12" height="9" viewBox="0 0 12 9"><path d="M0.8 4.2L4 7.6L11 0.8" fill="none" stroke="#1a1a1a" stroke-width="1.8"/></svg>
<svg style="left:360px;top:445.8px" width="24" height="16" viewBox="0 0 24 16"><path d="M5 1L1.2 4.8M1.2 4.8v-3M1.2 4.8h3" stroke="#222" stroke-width="1" fill="none"/><path d="M9.5 0.8L14 5.5h-9z" fill="#ffe25a" stroke="#b07a10" stroke-width="0.9"/><rect x="0.5" y="8" width="5.5" height="5.5" fill="#ffe25a" stroke="#b07a10" stroke-width="0.9"/><path d="M7.5 9.5h3.5l1.8 2.2-1.8 2.2" stroke="#333" stroke-width="1" fill="none"/></svg>
<div class="tr" style="left:378px;top:444.8px">AT24-323364.ASM</div>
<svg style="left:309px;top:466.0px" width="9" height="8"><path d="M0.5 0.5h8l-4 7z" fill="#8a8a8a"/></svg>
<svg style="left:325px;top:465.0px" width="12" height="9" viewBox="0 0 12 9"><path d="M0.8 4.2L4 7.6L11 0.8" fill="none" stroke="#1a1a1a" stroke-width="1.8"/></svg>
<svg style="left:342px;top:462.0px" width="24" height="16" viewBox="0 0 24 16"><path d="M5.0 2.7h7v7h-7z" fill="#f4f4f4" stroke="#6a6a6a" stroke-width="0.9"/><path d="M5.0 2.7l2.2-2.2h7l-2.2 2.2z" fill="#ffffff" stroke="#6a6a6a" stroke-width="0.9"/><path d="M12.0 2.7l2.2-2.2v7l-2.2 2.2z" fill="#d8d8d8" stroke="#6a6a6a" stroke-width="0.9"/><path d="M3.0 4.7h7v7h-7z" fill="#8ae6e6" stroke="#5a6a6a" stroke-width="0.9"/><path d="M3.0 4.7l2.2-2.2h7l-2.2 2.2z" fill="#c8f6f6" stroke="#5a6a6a" stroke-width="0.9"/><path d="M10.0 4.7l2.2-2.2v7l-2.2 2.2z" fill="#40b0b0" stroke="#5a6a6a" stroke-width="0.9"/><path d="M0.5 7.2h7v7h-7z" fill="#ffe95a" stroke="#a8700a" stroke-width="0.9"/><path d="M0.5 7.2l2.2-2.2h7l-2.2 2.2z" fill="#fff6b0" stroke="#a8700a" stroke-width="0.9"/><path d="M7.5 7.2l2.2-2.2v7l-2.2 2.2z" fill="#d8b020" stroke="#a8700a" stroke-width="0.9"/></svg>
<div class="tr" style="left:360px;top:461.0px">WHEEL_FR.ASM</div>
<svg style="left:328px;top:481.2px" width="8" height="9"><path d="M0.5 0.5v8l7-4z" fill="#8a8a8a"/></svg>
<svg style="left:360px;top:478.2px" width="24" height="16" viewBox="0 0 24 16"><path d="M5 1L1.2 4.8M1.2 4.8v-3M1.2 4.8h3" stroke="#222" stroke-width="1" fill="none"/><path d="M9.5 0.8L14 5.5h-9z" fill="#ffe25a" stroke="#b07a10" stroke-width="0.9"/><rect x="0.5" y="8" width="5.5" height="5.5" fill="#ffe25a" stroke="#b07a10" stroke-width="0.9"/><path d="M10.3 7.5l1.1 2.3 2.5 0.3-1.8 1.7 0.5 2.5-2.3-1.2-2.3 1.2 0.5-2.5-1.8-1.7 2.5-0.3z" fill="#1f5ad8"/></svg>
<div class="tr" style="left:378px;top:477.2px">AT323364W.ASM</div>
<svg style="left:328px;top:497.4px" width="8" height="9"><path d="M0.5 0.5v8l7-4z" fill="#8a8a8a"/></svg>
<svg style="left:343px;top:497.4px" width="12" height="9" viewBox="0 0 12 9"><path d="M0.8 4.2L4 7.6L11 0.8" fill="none" stroke="#1a1a1a" stroke-width="1.8"/></svg>
<svg style="left:360px;top:494.4px" width="24" height="16" viewBox="0 0 24 16"><path d="M5 1L1.2 4.8M1.2 4.8v-3M1.2 4.8h3" stroke="#222" stroke-width="1" fill="none"/><path d="M9.5 0.8L14 5.5h-9z" fill="#ffe25a" stroke="#b07a10" stroke-width="0.9"/><rect x="0.5" y="8" width="5.5" height="5.5" fill="#ffe25a" stroke="#b07a10" stroke-width="0.9"/><path d="M7.5 9.5h3.5l1.8 2.2-1.8 2.2" stroke="#333" stroke-width="1" fill="none"/></svg>
<div class="tr" style="left:378px;top:493.4px">AT24-323364.ASM</div>
<svg style="left:309px;top:514.5999999999999px" width="9" height="8"><path d="M0.5 0.5h8l-4 7z" fill="#8a8a8a"/></svg>
<svg style="left:325px;top:513.5999999999999px" width="12" height="9" viewBox="0 0 12 9"><path d="M0.8 4.2L4 7.6L11 0.8" fill="none" stroke="#1a1a1a" stroke-width="1.8"/></svg>
<svg style="left:342px;top:510.59999999999997px" width="24" height="16" viewBox="0 0 24 16"><path d="M5.0 2.7h7v7h-7z" fill="#f4f4f4" stroke="#6a6a6a" stroke-width="0.9"/><path d="M5.0 2.7l2.2-2.2h7l-2.2 2.2z" fill="#ffffff" stroke="#6a6a6a" stroke-width="0.9"/><path d="M12.0 2.7l2.2-2.2v7l-2.2 2.2z" fill="#d8d8d8" stroke="#6a6a6a" stroke-width="0.9"/><path d="M3.0 4.7h7v7h-7z" fill="#8ae6e6" stroke="#5a6a6a" stroke-width="0.9"/><path d="M3.0 4.7l2.2-2.2h7l-2.2 2.2z" fill="#c8f6f6" stroke="#5a6a6a" stroke-width="0.9"/><path d="M10.0 4.7l2.2-2.2v7l-2.2 2.2z" fill="#40b0b0" stroke="#5a6a6a" stroke-width="0.9"/><path d="M0.5 7.2h7v7h-7z" fill="#ffe95a" stroke="#a8700a" stroke-width="0.9"/><path d="M0.5 7.2l2.2-2.2h7l-2.2 2.2z" fill="#fff6b0" stroke="#a8700a" stroke-width="0.9"/><path d="M7.5 7.2l2.2-2.2v7l-2.2 2.2z" fill="#d8b020" stroke="#a8700a" stroke-width="0.9"/></svg>
<div class="tr" style="left:360px;top:509.59999999999997px">WHEEL_RL.ASM</div>
<svg style="left:328px;top:529.8px" width="8" height="9"><path d="M0.5 0.5v8l7-4z" fill="#8a8a8a"/></svg>
<svg style="left:360px;top:526.8px" width="24" height="16" viewBox="0 0 24 16"><path d="M5 1L1.2 4.8M1.2 4.8v-3M1.2 4.8h3" stroke="#222" stroke-width="1" fill="none"/><path d="M9.5 0.8L14 5.5h-9z" fill="#ffe25a" stroke="#b07a10" stroke-width="0.9"/><rect x="0.5" y="8" width="5.5" height="5.5" fill="#ffe25a" stroke="#b07a10" stroke-width="0.9"/><path d="M10.3 7.5l1.1 2.3 2.5 0.3-1.8 1.7 0.5 2.5-2.3-1.2-2.3 1.2 0.5-2.5-1.8-1.7 2.5-0.3z" fill="#1f5ad8"/></svg>
<div class="tr" style="left:378px;top:525.8px">AT323364W.ASM</div>
<svg style="left:328px;top:546.0px" width="8" height="9"><path d="M0.5 0.5v8l7-4z" fill="#8a8a8a"/></svg>
<svg style="left:343px;top:546.0px" width="12" height="9" viewBox="0 0 12 9"><path d="M0.8 4.2L4 7.6L11 0.8" fill="none" stroke="#1a1a1a" stroke-width="1.8"/></svg>
<svg style="left:360px;top:543.0px" width="24" height="16" viewBox="0 0 24 16"><path d="M5 1L1.2 4.8M1.2 4.8v-3M1.2 4.8h3" stroke="#222" stroke-width="1" fill="none"/><path d="M9.5 0.8L14 5.5h-9z" fill="#ffe25a" stroke="#b07a10" stroke-width="0.9"/><rect x="0.5" y="8" width="5.5" height="5.5" fill="#ffe25a" stroke="#b07a10" stroke-width="0.9"/><path d="M7.5 9.5h3.5l1.8 2.2-1.8 2.2" stroke="#333" stroke-width="1" fill="none"/></svg>
<div class="tr" style="left:378px;top:542.0px">AT24-323364.ASM</div>
<svg style="left:310px;top:562.2px" width="8" height="9"><path d="M0.5 0.5v8l7-4z" fill="#8a8a8a"/></svg>
<svg style="left:325px;top:562.2px" width="12" height="9" viewBox="0 0 12 9"><path d="M0.8 4.2L4 7.6L11 0.8" fill="none" stroke="#1a1a1a" stroke-width="1.8"/></svg>
<svg style="left:342px;top:559.2px" width="24" height="16" viewBox="0 0 24 16"><path d="M5.0 2.7h7v7h-7z" fill="#f4f4f4" stroke="#6a6a6a" stroke-width="0.9"/><path d="M5.0 2.7l2.2-2.2h7l-2.2 2.2z" fill="#ffffff" stroke="#6a6a6a" stroke-width="0.9"/><path d="M12.0 2.7l2.2-2.2v7l-2.2 2.2z" fill="#d8d8d8" stroke="#6a6a6a" stroke-width="0.9"/><path d="M3.0 4.7h7v7h-7z" fill="#8ae6e6" stroke="#5a6a6a" stroke-width="0.9"/><path d="M3.0 4.7l2.2-2.2h7l-2.2 2.2z" fill="#c8f6f6" stroke="#5a6a6a" stroke-width="0.9"/><path d="M10.0 4.7l2.2-2.2v7l-2.2 2.2z" fill="#40b0b0" stroke="#5a6a6a" stroke-width="0.9"/><path d="M0.5 7.2h7v7h-7z" fill="#ffe95a" stroke="#a8700a" stroke-width="0.9"/><path d="M0.5 7.2l2.2-2.2h7l-2.2 2.2z" fill="#fff6b0" stroke="#a8700a" stroke-width="0.9"/><path d="M7.5 7.2l2.2-2.2v7l-2.2 2.2z" fill="#d8b020" stroke="#a8700a" stroke-width="0.9"/></svg>
<div class="tr" style="left:360px;top:558.2px">WHEEL_RR.ASM</div>
<svg style="left:310px;top:578.4px" width="8" height="9"><path d="M0.5 0.5v8l7-4z" fill="#8a8a8a"/></svg>
<svg style="left:325px;top:578.4px" width="12" height="9" viewBox="0 0 12 9"><path d="M0.8 4.2L4 7.6L11 0.8" fill="none" stroke="#1a1a1a" stroke-width="1.8"/></svg>
<svg style="left:342px;top:575.4px" width="24" height="16" viewBox="0 0 24 16"><path d="M5.0 2.7h7v7h-7z" fill="#f4f4f4" stroke="#6a6a6a" stroke-width="0.9"/><path d="M5.0 2.7l2.2-2.2h7l-2.2 2.2z" fill="#ffffff" stroke="#6a6a6a" stroke-width="0.9"/><path d="M12.0 2.7l2.2-2.2v7l-2.2 2.2z" fill="#d8d8d8" stroke="#6a6a6a" stroke-width="0.9"/><path d="M3.0 4.7h7v7h-7z" fill="#8ae6e6" stroke="#5a6a6a" stroke-width="0.9"/><path d="M3.0 4.7l2.2-2.2h7l-2.2 2.2z" fill="#c8f6f6" stroke="#5a6a6a" stroke-width="0.9"/><path d="M10.0 4.7l2.2-2.2v7l-2.2 2.2z" fill="#40b0b0" stroke="#5a6a6a" stroke-width="0.9"/><path d="M0.5 7.2h7v7h-7z" fill="#ffe95a" stroke="#a8700a" stroke-width="0.9"/><path d="M0.5 7.2l2.2-2.2h7l-2.2 2.2z" fill="#fff6b0" stroke="#a8700a" stroke-width="0.9"/><path d="M7.5 7.2l2.2-2.2v7l-2.2 2.2z" fill="#d8b020" stroke="#a8700a" stroke-width="0.9"/></svg>
<div class="tr" style="left:360px;top:574.4px">FRAME.ASM</div>
<svg style="left:310px;top:594.5999999999999px" width="8" height="9"><path d="M0.5 0.5v8l7-4z" fill="#8a8a8a"/></svg>
<svg style="left:325px;top:594.5999999999999px" width="12" height="9" viewBox="0 0 12 9"><path d="M0.8 4.2L4 7.6L11 0.8" fill="none" stroke="#1a1a1a" stroke-width="1.8"/></svg>
<svg style="left:342px;top:591.5999999999999px" width="24" height="16" viewBox="0 0 24 16"><path d="M5.0 2.7h7v7h-7z" fill="#f4f4f4" stroke="#6a6a6a" stroke-width="0.9"/><path d="M5.0 2.7l2.2-2.2h7l-2.2 2.2z" fill="#ffffff" stroke="#6a6a6a" stroke-width="0.9"/><path d="M12.0 2.7l2.2-2.2v7l-2.2 2.2z" fill="#d8d8d8" stroke="#6a6a6a" stroke-width="0.9"/><path d="M3.0 4.7h7v7h-7z" fill="#8ae6e6" stroke="#5a6a6a" stroke-width="0.9"/><path d="M3.0 4.7l2.2-2.2h7l-2.2 2.2z" fill="#c8f6f6" stroke="#5a6a6a" stroke-width="0.9"/><path d="M10.0 4.7l2.2-2.2v7l-2.2 2.2z" fill="#40b0b0" stroke="#5a6a6a" stroke-width="0.9"/><path d="M0.5 7.2h7v7h-7z" fill="#ffe95a" stroke="#a8700a" stroke-width="0.9"/><path d="M0.5 7.2l2.2-2.2h7l-2.2 2.2z" fill="#fff6b0" stroke="#a8700a" stroke-width="0.9"/><path d="M7.5 7.2l2.2-2.2v7l-2.2 2.2z" fill="#d8b020" stroke="#a8700a" stroke-width="0.9"/></svg>
<div class="tr" style="left:360px;top:590.5999999999999px">BUCKET_FIXTURE.ASM</div>
<svg style="left:310px;top:610.8px" width="8" height="9"><path d="M0.5 0.5v8l7-4z" fill="#8a8a8a"/></svg>
<svg style="left:325px;top:610.8px" width="12" height="9" viewBox="0 0 12 9"><path d="M0.8 4.2L4 7.6L11 0.8" fill="none" stroke="#a9a9a9" stroke-width="1.8"/></svg>
<svg style="left:342px;top:607.8px" width="24" height="16" viewBox="0 0 24 16"><path d="M1.5 3.5h10v10h-10z" fill="#ffe45a" stroke="#a8700a" stroke-width="1"/><path d="M1.5 3.5l2-2h10l-2 2z" fill="#fff0a0" stroke="#a8700a" stroke-width="0.9"/><path d="M11.5 3.5l2-2v10l-2 2z" fill="#d8a818" stroke="#a8700a" stroke-width="0.9"/><path d="M3.5 3.5h8v8h-8z" fill="#8ae8e8"/></svg>
<div class="tr" style="left:360px;top:606.8px">FLEXHOSES.ASM</div>
<svg style="left:310px;top:627.0px" width="8" height="9"><path d="M0.5 0.5v8l7-4z" fill="#8a8a8a"/></svg>
<svg style="left:325px;top:627.0px" width="12" height="9" viewBox="0 0 12 9"><path d="M0.8 4.2L4 7.6L11 0.8" fill="none" stroke="#a9a9a9" stroke-width="1.8"/></svg>
<svg style="left:342px;top:624.0px" width="24" height="16" viewBox="0 0 24 16"><path d="M5.0 2.7h7v7h-7z" fill="#f4f4f4" stroke="#6a6a6a" stroke-width="0.9"/><path d="M5.0 2.7l2.2-2.2h7l-2.2 2.2z" fill="#ffffff" stroke="#6a6a6a" stroke-width="0.9"/><path d="M12.0 2.7l2.2-2.2v7l-2.2 2.2z" fill="#d8d8d8" stroke="#6a6a6a" stroke-width="0.9"/><path d="M3.0 4.7h7v7h-7z" fill="#8ae6e6" stroke="#5a6a6a" stroke-width="0.9"/><path d="M3.0 4.7l2.2-2.2h7l-2.2 2.2z" fill="#c8f6f6" stroke="#5a6a6a" stroke-width="0.9"/><path d="M10.0 4.7l2.2-2.2v7l-2.2 2.2z" fill="#40b0b0" stroke="#5a6a6a" stroke-width="0.9"/><path d="M0.5 7.2h7v7h-7z" fill="#ffe95a" stroke="#a8700a" stroke-width="0.9"/><path d="M0.5 7.2l2.2-2.2h7l-2.2 2.2z" fill="#fff6b0" stroke="#a8700a" stroke-width="0.9"/><path d="M7.5 7.2l2.2-2.2v7l-2.2 2.2z" fill="#d8b020" stroke="#a8700a" stroke-width="0.9"/><path d="M10.5 7.5l4 4-4 4-4-4z" fill="#1d4a9a" stroke="#0c2a60" stroke-width="0.8"/></svg>
<div class="tr" style="left:360px;top:623.0px">AT308471_CP.ASM</div>
<svg style="left:310px;top:643.2px" width="8" height="9"><path d="M0.5 0.5v8l7-4z" fill="#8a8a8a"/></svg>
<svg style="left:325px;top:643.2px" width="12" height="9" viewBox="0 0 12 9"><path d="M0.8 4.2L4 7.6L11 0.8" fill="none" stroke="#a9a9a9" stroke-width="1.8"/></svg>
<svg style="left:342px;top:640.2px" width="24" height="16" viewBox="0 0 24 16"><path d="M1.5 3.5h10v10h-10z" fill="#ffe45a" stroke="#a8700a" stroke-width="1"/><path d="M1.5 3.5l2-2h10l-2 2z" fill="#fff0a0" stroke="#a8700a" stroke-width="0.9"/><path d="M11.5 3.5l2-2v10l-2 2z" fill="#d8a818" stroke="#a8700a" stroke-width="0.9"/><path d="M3.5 3.5h8v8h-8z" fill="#8ae8e8"/></svg>
<div class="tr" style="left:360px;top:639.2px">AT228258.ASM</div>
<svg style="left:310px;top:659.4px" width="8" height="9"><path d="M0.5 0.5v8l7-4z" fill="#8a8a8a"/></svg>
<svg style="left:325px;top:659.4px" width="12" height="9" viewBox="0 0 12 9"><path d="M0.8 4.2L4 7.6L11 0.8" fill="none" stroke="#a9a9a9" stroke-width="1.8"/></svg>
<svg style="left:342px;top:656.4px" width="24" height="16" viewBox="0 0 24 16"><path d="M1.5 3.5h10v10h-10z" fill="#ffe45a" stroke="#a8700a" stroke-width="1"/><path d="M1.5 3.5l2-2h10l-2 2z" fill="#fff0a0" stroke="#a8700a" stroke-width="0.9"/><path d="M11.5 3.5l2-2v10l-2 2z" fill="#d8a818" stroke="#a8700a" stroke-width="0.9"/><path d="M3.5 3.5h8v8h-8z" fill="#8ae8e8"/></svg>
<div class="tr" style="left:360px;top:655.4px">AT300434.ASM</div>
<svg style="left:310px;top:675.6px" width="8" height="9"><path d="M0.5 0.5v8l7-4z" fill="#8a8a8a"/></svg>
<svg style="left:325px;top:675.6px" width="12" height="9" viewBox="0 0 12 9"><path d="M0.8 4.2L4 7.6L11 0.8" fill="none" stroke="#a9a9a9" stroke-width="1.8"/></svg>
<svg style="left:342px;top:672.6px" width="24" height="16" viewBox="0 0 24 16"><path d="M1.5 3.5h10v10h-10z" fill="#ffe45a" stroke="#a8700a" stroke-width="1"/><path d="M1.5 3.5l2-2h10l-2 2z" fill="#fff0a0" stroke="#a8700a" stroke-width="0.9"/><path d="M11.5 3.5l2-2v10l-2 2z" fill="#d8a818" stroke="#a8700a" stroke-width="0.9"/><path d="M3.5 3.5h8v8h-8z" fill="#8ae8e8"/></svg>
<div class="tr" style="left:360px;top:671.6px">AT323846.ASM</div>
<svg style="left:309px;top:692.8px" width="9" height="8"><path d="M0.5 0.5h8l-4 7z" fill="#8a8a8a"/></svg>
<svg style="left:325px;top:691.8px" width="12" height="9" viewBox="0 0 12 9"><path d="M0.8 4.2L4 7.6L11 0.8" fill="none" stroke="#1a1a1a" stroke-width="1.8"/></svg>
<svg style="left:342px;top:688.8px" width="24" height="16" viewBox="0 0 24 16"><path d="M5.0 2.7h7v7h-7z" fill="#f4f4f4" stroke="#6a6a6a" stroke-width="0.9"/><path d="M5.0 2.7l2.2-2.2h7l-2.2 2.2z" fill="#ffffff" stroke="#6a6a6a" stroke-width="0.9"/><path d="M12.0 2.7l2.2-2.2v7l-2.2 2.2z" fill="#d8d8d8" stroke="#6a6a6a" stroke-width="0.9"/><path d="M3.0 4.7h7v7h-7z" fill="#8ae6e6" stroke="#5a6a6a" stroke-width="0.9"/><path d="M3.0 4.7l2.2-2.2h7l-2.2 2.2z" fill="#c8f6f6" stroke="#5a6a6a" stroke-width="0.9"/><path d="M10.0 4.7l2.2-2.2v7l-2.2 2.2z" fill="#40b0b0" stroke="#5a6a6a" stroke-width="0.9"/><path d="M0.5 7.2h7v7h-7z" fill="#ffe95a" stroke="#a8700a" stroke-width="0.9"/><path d="M0.5 7.2l2.2-2.2h7l-2.2 2.2z" fill="#fff6b0" stroke="#a8700a" stroke-width="0.9"/><path d="M7.5 7.2l2.2-2.2v7l-2.2 2.2z" fill="#d8b020" stroke="#a8700a" stroke-width="0.9"/><path d="M18 1v8M20 3v6.5h3v-3h-3" stroke="#222" stroke-width="1.3" fill="none"/></svg>
<div class="tr" style="left:367px;top:687.8px">BUCKET.ASM</div>
<svg style="left:328px;top:708.0px" width="8" height="9"><path d="M0.5 0.5v8l7-4z" fill="#8a8a8a"/></svg>
<svg style="left:360px;top:705.0px" width="24" height="16" viewBox="0 0 24 16"><path d="M5 1L1.2 4.8M1.2 4.8v-3M1.2 4.8h3" stroke="#222" stroke-width="1" fill="none"/><path d="M9.5 0.8L14 5.5h-9z" fill="#ffe25a" stroke="#b07a10" stroke-width="0.9"/><rect x="0.5" y="8" width="5.5" height="5.5" fill="#ffe25a" stroke="#b07a10" stroke-width="0.9"/><path d="M10.3 7.5l1.1 2.3 2.5 0.3-1.8 1.7 0.5 2.5-2.3-1.2-2.3 1.2 0.5-2.5-1.8-1.7 2.5-0.3z" fill="#1f5ad8"/></svg>
<div class="tr" style="left:378px;top:704.0px">AT315765.ASM</div>
<svg style="left:328px;top:724.1999999999999px" width="8" height="9"><path d="M0.5 0.5v8l7-4z" fill="#8a8a8a"/></svg>
<svg style="left:343px;top:724.1999999999999px" width="12" height="9" viewBox="0 0 12 9"><path d="M0.8 4.2L4 7.6L11 0.8" fill="none" stroke="#1a1a1a" stroke-width="1.8"/></svg>
<svg style="left:360px;top:721.1999999999999px" width="24" height="16" viewBox="0 0 24 16"><path d="M5 1L1.2 4.8M1.2 4.8v-3M1.2 4.8h3" stroke="#222" stroke-width="1" fill="none"/><path d="M9.5 0.8L14 5.5h-9z" fill="#ffe25a" stroke="#b07a10" stroke-width="0.9"/><rect x="0.5" y="8" width="5.5" height="5.5" fill="#ffe25a" stroke="#b07a10" stroke-width="0.9"/><path d="M7.5 9.5h3.5l1.8 2.2-1.8 2.2" stroke="#333" stroke-width="1" fill="none"/></svg>
<div class="tr" style="left:378px;top:720.1999999999999px">AT24-227412.ASM</div>
<div class="a panel" style="left:591px;top:71px;width:839px;height:973px"><div class="phead">Model Graphics</div></div>
<div class="a btn" style="left:595.5px;top:106.5px;width:242px;height:21px;line-height:21px;border-radius:3px;text-align:left;padding-left:9px">Show: Complete Modules; Incompl...</div>
<svg style="left:828px;top:114px" width="7" height="5"><path d="M0.6 0.3h6l-3 4.2z" fill="#2e3340"/></svg>
<svg style="left:1393px;top:108px" width="18" height="18" viewBox="0 0 18 18"><path d="M0.8 6.8 Q0.8 4 4 3.8 L10.8 3.5 L10.8 7.2 L4.2 7.2 Q2.2 7.2 1.8 9Z" fill="#ececec" stroke="#555" stroke-width="0.9"/><rect x="4.6" y="7.2" width="3.2" height="10.5" fill="#f2b020" stroke="#6a2a0a" stroke-width="0.8"/><rect x="5.3" y="11" width="1.8" height="6.3" fill="#d02010"/><path d="M11.2 7.5 L11.2 3.2 Q10.2 1.5 11.6 0.6 L12.6 2.6 L14 2.6 L15 0.6 Q16.6 1.6 15.6 3.4 L15.6 7.5Z" fill="#dcdcdc" stroke="#555" stroke-width="0.9"/><rect x="11.5" y="7.5" width="3.4" height="9.5" fill="#2a6ad8" stroke="#1a3a80" stroke-width="0.8"/></svg>
<svg style="left:1417px;top:114px" width="7" height="5"><path d="M0.6 0.3h6l-3 4.2z" fill="#2e3340"/></svg>
<div class="a" style="left:599px;top:133px;width:818px;height:907px;background:#eceef1;border:1px solid #d4d6d9;box-shadow:inset 1px 1px 0 #e0e2e5"></div>
<div class="a" style="left:607.5px;top:137px;width:800.5px;height:896px;background:#f9f9f9"></div>
<!--loader-->
<svg style="left:607px;top:137px" width="801" height="896" viewBox="607 137 801 896">
<defs>
<linearGradient id="bk" x1="0" y1="0" x2="0.15" y2="1"><stop offset="0" stop-color="#232323"/><stop offset="0.3" stop-color="#333"/><stop offset="0.7" stop-color="#444"/><stop offset="1" stop-color="#474747"/></linearGradient>
<linearGradient id="rim" x1="0" y1="0" x2="0" y2="1"><stop offset="0" stop-color="#8a6a00"/><stop offset="0.35" stop-color="#d0a000"/><stop offset="0.7" stop-color="#ffc800"/><stop offset="1" stop-color="#ffd000"/></linearGradient>
<linearGradient id="cabg" x1="0" y1="0" x2="0" y2="1"><stop offset="0" stop-color="#3a3a3a"/><stop offset="1" stop-color="#404040"/></linearGradient>
</defs>
<!-- rear tire -->
<path d="M1241 515 L1295 508 Q1345 512 1362 565 Q1372 640 1345 688 Q1330 702 1305 698 L1241 688 Q1215 682 1213 676 L1241 668Z" fill="#242424"/>
<ellipse cx="1322" cy="617" rx="43" ry="86" transform="rotate(12 1322 617)" fill="#1e1e1e"/>
<ellipse cx="1325" cy="610" rx="22" ry="49" transform="rotate(12 1325 610)" fill="url(#rim)"/>
<path d="M1307 598 L1343 606 M1304 633 L1330 643" stroke="#a07800" stroke-width="1.5"/>
<!-- rear hood dark top -->
<path d="M1190 372 L1209 354 L1335 379 L1337 384 L1207 436 L1190 437Z" fill="#3a3a3a"/>
<!-- rear yellow face -->
<path d="M1190 437 L1207 436 L1337 384 L1337 482 Q1320 466 1302 460 Q1270 448 1223 450 L1192 462Z" fill="#d6a200"/>
<path d="M1207 436 L1337 384 L1337 392 L1225 440Z" fill="#f2b800"/>
<rect x="1333" y="392" width="14" height="17" fill="#ffc400"/>
<path d="M1340 409 L1343 510" stroke="#f2bb00" stroke-width="3"/>
<!-- rear rails -->
<g fill="none" stroke="#f0b800" stroke-width="2">
<path d="M1216 372 L1219 452 M1216 372 L1280 384 L1280 470 M1248 407 L1239 489 M1294 415 L1300 456 M1323 399 L1329 474 M1215 403 L1250 409 M1296 382 L1330 376"/>
</g>
<g fill="none" stroke="#2a3ac0" stroke-width="1" stroke-dasharray="2 2">
<path d="M1217 374 L1220 452 M1281 386 L1281 470 M1249 409 L1240 489 M1324 401 L1330 474"/>
</g>
<!-- rear fender -->
<path d="M1223 450 Q1270 446 1302 460 Q1330 474 1343 519 L1348 535 Q1320 512 1290 510 L1245 516 L1240 500 L1212 500Z" fill="#282828"/><path d="M1223 450 Q1270 446 1302 460 Q1330 474 1343 519 L1338 526 Q1322 488 1290 474 Q1262 464 1230 464Z" fill="#343434"/>
<!-- deck -->
<path d="M1192 462 L1211 450 L1294 466 L1272 487 L1258 515 L1192 523Z" fill="#f9c300"/>
<!-- dark block between ladder and rear tire -->
<path d="M1178 520 L1258 515 L1260 677 L1241 677 L1222 670 L1178 672Z" fill="#373737"/>
<path d="M1228 522 L1260 518 L1260 677 L1228 672Z" fill="#2e2e2e"/>
<!-- ladder -->
<g stroke="#f0b800" fill="none">
<path d="M1187 532 L1193 652 M1210 528 L1218 650" stroke-width="2.2"/>
<path d="M1190 560 L1213 556 M1191 582 L1214 578 M1192 605 L1216 600 M1193 628 L1218 622 M1185 650 L1225 645" stroke-width="3"/>
</g>
<path d="M1189 662 L1222 662 L1222 673 L1189 673Z" fill="#f9f9f9"/><path d="M1188 532 L1194 652 M1211 528 L1219 650" stroke="#2a3ac0" stroke-width="1" stroke-dasharray="2 2" fill="none"/>
<!-- yellow mid body -->
<path d="M1130 468 L1193 433 L1193 530 L1185 540 L1185 640 L1165 630 L1130 590Z" fill="#f2bb00"/>
<!-- cab -->
<path d="M1021 354 L1127 378 L1125 522 L1093 527 L1022 513 L1015 500 Z" fill="#3c3c3c"/>
<path d="M1030 373 L1122 384 L1122 460 L1032 445Z" fill="#474747"/>
<path d="M1049 379 L1061 380 L1059 412 L1049 410Z M1078 383 L1099 385 L1097 397 L1078 395Z" fill="#8e8e8e"/>
<path d="M1096 384 Q1108 378 1118 388 L1118 408 L1098 404Z" fill="#262626"/>
<path d="M1063 404 L1067 404 L1067 413 L1063 413Z" fill="#9a9a9a"/>
<path d="M1035 440 L1058 425 L1080 430 L1075 452 L1040 455Z" fill="#555"/>
<path d="M1048 440 L1060 438 L1062 455 L1050 456Z" fill="#2a3550"/>
<path d="M1060 475 L1105 385 M1068 478 L1112 392 M1058 460 L1118 445" stroke="#2e2e2e" stroke-width="1.5"/>
<path d="M1095 478 L1122 474" stroke="#555" stroke-width="2"/>
<path d="M1032 445 L1122 460 L1124 520 L1093 524 L1035 512Z" fill="#353535"/>
<path d="M1124 377 L1191 355 L1191 500 L1136 522 L1124 522Z" fill="#333"/>
<path d="M1124 377 L1136 380 L1136 522 L1124 522Z" fill="#404040"/>
<path d="M1021 354 L1036 331 L1064 318 L1089 317 L1176 333 L1191 344 L1191 354 L1133 378 L1124 378Z" fill="#f5c000" stroke="#f5c000" stroke-width="0.8"/>
<path d="M1036 331 L1064 318 L1089 317 L1176 333 L1185 340 L1110 345 L1040 336Z" fill="#ffcf1a"/>
<path d="M1176 315 L1183 303 L1186 318 L1180 330Z" fill="#333"/>
<path d="M1030 336 Q1050 318 1090 314 M1180 330 Q1200 335 1202 348" stroke="#333" stroke-width="2" fill="none"/>
<!-- handrail front of cab -->
<path d="M1155 512 L1155 440 Q1157 430 1165 432 L1172 490 L1178 545" stroke="#f0b800" stroke-width="2.5" fill="none"/>
<!-- mirror + left rails -->
<path d="M980 364 L986 352 L1008 350 L1010 384 L990 388 L982 380Z" fill="#333"/>
<g stroke="#f0b800" stroke-width="2" fill="none">
<path d="M981 364 L979 392 L966 498 M984 500 L986 405 Q987 400 991 400 L996 400 Q999 402 999 406 L995 500 M982 364 Q985 355 992 352 L1035 320 M1003 372 L1022 356"/>
</g>
<path d="M993 392 L993 500" stroke="#2030b0" stroke-width="1" stroke-dasharray="2 1.5"/>
<!-- left yellow body -->
<path d="M1020 418 L1022 515 L985 530 L962 522 L968 500Z" fill="#f5bf00"/><path d="M972 475 L985 470 L988 497 L973 500Z" fill="#333"/>
<path d="M932 489 L950 487 L956 494 L955 522 L934 526Z" fill="#f2bc00"/>
<!-- yellow chassis right of arms -->
<path d="M954 500 L1000 497 L1020 510 L1060 518 L1185 530 L1185 640 L1165 630 L1137 600 L1110 587 L1100 590 L1064 612 L1040 650 L1025 700 L990 705 L975 660 L954 560Z" fill="#f2ba00"/>
<path d="M1104 519 L1125 519 L1130 560 L1108 585Z" fill="#ffc800"/>
<path d="M1110 560 L1130 560 L1132 592 L1112 592Z" fill="#222"/>
<path d="M1150 540 L1185 536 L1185 600 L1160 610Z" fill="#dca400"/>
<path d="M1060 522 L1160 522 L1158 540 Q1110 552 1076 546 L1060 540Z" fill="#363636"/>
<path d="M1083 518 L1105 518 L1107 554 L1085 556Z" fill="#f5be00"/>
<!-- dark boom/frame -->
<path d="M889 541 L930 545 L973 553 L990 669 L960 672 L905 655 L892 600Z" fill="#3a3a3a"/>
<path d="M918 545 L945 552 L960 662 L935 657Z" fill="#363636"/>
<path d="M857 556 L870 547 L896 546 L892 566 L862 563Z" fill="#3c3c3c"/>
<path d="M930 546 L990 508" stroke="#393939" stroke-width="13"/>
<path d="M900 545 L986 529" stroke="#2e2e2e" stroke-width="9" stroke-linecap="round"/>
<path d="M952 557 L1036 542" stroke="#2c2c2c" stroke-width="10" stroke-linecap="round"/>
<path d="M990 520 Q1000 505 1010 525 Q1020 508 1025 530 M985 540 Q995 520 1008 548" stroke="#1a2aa0" stroke-width="1.2" fill="none"/>
<path d="M969 600 L1076 519 L1084 519 L1072 590 L1055 594 L1017 623 L985 676 L972 650Z" fill="#393939"/>
<path d="M1030 578 L1036 562 L1042 565 L1038 578Z M1046 570 L1052 556 L1058 559 L1054 570Z M1060 562 L1064 550 L1068 552 L1066 562Z" fill="#1c1c1c"/>
<path d="M1012 650 L1052 622" stroke="#2c2c2c" stroke-width="10" stroke-linecap="round"/>
<!-- left front tire behind bucket -->
<path d="M805 580 Q812 562 840 563 L887 568 L900 640 L805 640Z" fill="#242424"/>
<!-- front cylinder -->
<path d="M1006 648 L1050 622 L1060 632 L1014 662Z" fill="#2a2a2a"/>
<!-- front tire -->
<path d="M1058 606 Q1100 596 1140 606 L1160 625 Q1192 660 1189 700 Q1183 790 1122 805 L1040 786 Q1022 760 1023 720 Q1028 660 1058 606Z" fill="#232323"/>
<!-- front fender -->
<path d="M1051 590 L1060 583 L1110 587 L1137 600 L1160 617 L1168 627 L1150 622 L1110 606 L1064 604 L1052 600Z" fill="#313131"/>

<ellipse cx="1145" cy="716" rx="43" ry="89" transform="rotate(10 1145 716)" fill="#1e1e1e"/>
<ellipse cx="1147" cy="716" rx="23" ry="49" transform="rotate(10 1147 716)" fill="url(#rim)"/>
<path d="M1132 689 L1166 697 M1125 728 L1160 738" stroke="#a07800" stroke-width="1.5"/>
<!-- bucket dark back (area behind grille) -->
<path d="M805 600 L985 615 L988 680 L805 648Z" fill="#2a2a2a"/>
<path d="M698 625 L805 612 L805 648Z" fill="#2c2c2c"/>
<!-- bucket -->
<path d="M696 624 L988 678 L975 822 L961 833 L662 776 L671 760 L672 745Z" fill="url(#bk)"/>
<path d="M696 624 L745 640 Q705 665 700 720 L676 772 L672 745Z" fill="#333"/>
<path d="M985 678 L1000 668 L1030 712 L1020 780 L993 810 L972 824 L975 760Z" fill="#3c3c3c"/>
<path d="M662 776 L961 833 L975 822 L972 815 L668 764Z" fill="#363636"/>
<path d="M835 705 L838 735 M850 708 L852 740 M878 716 L880 748 M895 720 L897 752" stroke="#2c2c2c" stroke-width="3"/>
<!-- grille -->
<g stroke="#404040" stroke-width="5.5">
<path d="M682 562 L970 617 M685 572 L972 627 M688 583 L975 638 M692 594 L978 649 M696 605 L981 660"/>
</g>
<g stroke="#343434" stroke-width="4">
<path d="M682 558 L698 623 M725 566 L742 632 M765 574 L782 640 M805 582 L821 648 M847 590 L862 656 M890 598 L905 664 M930 606 L945 672 M968 614 L985 678"/>
</g>
<path d="M862 600 L870 598 L868 640 L862 642Z M955 612 L962 612 L960 650 L955 652Z" fill="#d8b080"/>
</svg>
<div class="a" style="left:12px;top:1050px;width:34px;height:21px;background:linear-gradient(#d8d9db,#f3f4f5 3px,#e9eaec);border:1px solid #c9cbce;border-top-color:#a9abae"></div>
<div class="a" style="left:32px;top:1051px;width:1px;height:19px;background:#d9dbde"></div>
<svg style="left:15px;top:1053px" width="15" height="15" viewBox="0 0 15 15"><rect x="0.7" y="0.7" width="13.6" height="13.6" rx="1.2" fill="#dcdcd2" stroke="#6a9ad8" stroke-width="1.2"/><rect x="1.3" y="1.3" width="12.4" height="2.2" fill="#b9d3f2"/><rect x="1.3" y="3.5" width="2.8" height="10.2" fill="#f8f8f8"/><rect x="4.1" y="3.5" width="9.6" height="10.2" fill="#c8c6b4"/></svg>
<svg style="left:36px;top:1058px" width="7" height="5"><path d="M0.6 0.3h6l-3 4.2z" fill="#2e3340"/></svg>
<div class="a" style="left:49px;top:1050px;width:22px;height:21px;background:linear-gradient(#d8d9db,#f3f4f5 3px,#e9eaec);border:1px solid #c9cbce;border-top-color:#a9abae"></div>
<svg style="left:53px;top:1053px" width="13" height="15" viewBox="0 0 13 15"><path d="M0.5 0.5h8.5l3.5 3.5v10.5h-12z" fill="#f5f3e0" stroke="#555" stroke-width="0.9"/><circle cx="3" cy="5.5" r="1" fill="#333"/><path d="M5 5.5h5M5 10h5" stroke="#777" stroke-width="0.8"/><path d="M2 10h2" stroke="#333"/></svg>
<div class="a" style="left:75px;top:1050px;width:21px;height:21px;background:linear-gradient(#d8d9db,#f3f4f5 3px,#e9eaec);border:1px solid #c9cbce;border-top-color:#a9abae"></div>
<svg style="left:80px;top:1053px" width="12" height="15" viewBox="0 0 12 15"><path d="M2.5 3v9M2.5 6.5h6" stroke="#333" stroke-width="1"/><rect x="0.8" y="0.8" width="3.4" height="3" fill="#fff" stroke="#1040c0" stroke-width="1.2"/><rect x="0.8" y="5.5" width="3.4" height="3" fill="#fff" stroke="#1040c0" stroke-width="1.2"/><rect x="0.8" y="10.5" width="3.4" height="3" fill="#fff" stroke="#1040c0" stroke-width="1.2"/><rect x="7" y="5.5" width="3.4" height="3" fill="#fff" stroke="#1040c0" stroke-width="1.2"/></svg>
<div class="a" style="left:100px;top:1050px;width:22px;height:21px;background:linear-gradient(#d8d9db,#f3f4f5 3px,#e9eaec);border:1px solid #c9cbce;border-top-color:#a9abae"></div>
<svg style="left:102px;top:1055px" width="17" height="10" viewBox="0 0 17 10"><circle cx="4" cy="6" r="3" fill="#f5f3e0" stroke="#222" stroke-width="1.1"/><circle cx="11" cy="6" r="3" fill="#f5f3e0" stroke="#222" stroke-width="1.1"/><path d="M2 3 Q5 0 8 3 M10 3 Q13 0 16 3" stroke="#a05020" stroke-width="1" fill="none"/></svg>
<div class="a btn" style="left:952.5px;top:1046px;width:148px;height:28px;line-height:28px;border-radius:3px;font-size:11.8px">Update Representation</div>
<div class="a btn" style="left:1100.5px;top:1046px;width:116.5px;height:28px;line-height:28px;border-radius:3px;font-size:11.8px;background:linear-gradient(#bfe3fb,#8ccdf5);border-color:#86b9dd">Update Assembly</div>
<div class="a btn" style="left:1217px;top:1046px;width:147px;height:28px;line-height:28px;border-radius:3px;font-size:11.8px">Create Product Variant</div>
<div class="a btn" style="left:1374.5px;top:1046px;width:57px;height:28px;line-height:28px;border-radius:3px;font-size:11.8px">Cancel</div>

</body></html>
